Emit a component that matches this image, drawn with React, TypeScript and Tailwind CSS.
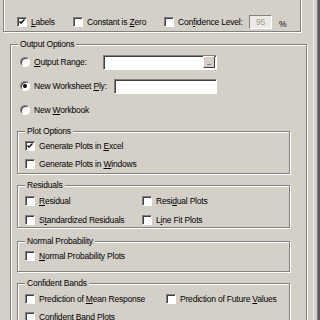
import type { ReactNode } from "react";

const font = { fontFamily: '"Liberation Sans", Arial, sans-serif' };

function Check({ on = false }: { on?: boolean }) {
  return (
    <span className="relative flex h-[10px] w-[10px] shrink-0 border border-t-[#808080] border-l-[#808080] border-b-white border-r-white bg-white shadow-[inset_1px_1px_0_#404040]">
      {on && (
        <svg viewBox="0 0 8 8" className="absolute left-[0px] top-[0px] h-[8px] w-[8px]">
          <path d="M1.5 3.5 L3 5 L6.5 1.5" stroke="#000" strokeWidth="1.4" fill="none" />
        </svg>
      )}
    </span>
  );
}

function Radio({ on = false }: { on?: boolean }) {
  return (
    <span className="flex h-[10px] w-[10px] shrink-0 items-center justify-center rounded-full border border-t-[#808080] border-l-[#808080] border-b-white border-r-white bg-white shadow-[inset_1px_1px_0_#404040]">
      {on && <span className="h-[4px] w-[4px] rounded-full bg-black" />}
    </span>
  );
}

function Group({ label, className, children }: { label: string; className: string; children?: ReactNode }) {
  return (
    <div className={`relative shrink-0 border border-[#808080] shadow-[inset_1px_1px_0_#fff,1px_1px_0_#fff] ${className}`}>
      <span className="absolute left-[7px] top-[-7px] bg-[#d4d0c8] px-[2px] leading-[12px]">{label}</span>
      {children}
    </div>
  );
}

function Item({ box, children, w }: { box: ReactNode; children: ReactNode; w?: string }) {
  return (
    <div className={`flex h-[12px] shrink-0 items-center gap-[4px] ${w ?? ""}`}>
      {box}
      <span className="whitespace-nowrap leading-[12px]">{children}</span>
    </div>
  );
}

const U = ({ c }: { c: string }) => <span className="underline underline-offset-[1px]">{c}</span>;

export default function App() {
  return (
    <div
      className="flex h-[320px] w-[320px] overflow-hidden bg-[#d4d0c8] text-[8.5px] tracking-[-0.2px] text-black"
      style={font}
    >
      <div className="flex w-[313px] shrink-0 flex-col">
        {/* top options */}
        <div className="ml-[3px] mt-[-12px] h-[44px] w-[298px] shrink-0 border border-[#808080] pl-[13px] pt-[24px] shadow-[inset_1px_1px_0_#fff,1px_1px_0_#fff]">
          <div className="flex items-center">
            <Item box={<Check on />} w="w-[56px]">
              <U c="L" />abels
            </Item>
            <Item box={<Check />} w="w-[91px]">
              Constant is <U c="Z" />ero
            </Item>
            <Item box={<Check />} w="w-[85px]">
              Con<U c="f" />idence Level:
            </Item>
            <div className="flex h-[14px] w-[23px] items-center justify-center border border-t-[#808080] border-l-[#808080] border-b-white border-r-white bg-[#eceae4] text-[#a09c94]">
              95
            </div>
            <span className="ml-[7px] mt-[5px]">%</span>
          </div>
        </div>

        {/* output options */}
        <Group label="Output Options" className="ml-[10px] mt-[12px] h-[300px] w-[297px]">
          <div className="flex flex-col gap-[8px] pl-[9px] pt-[9px]">
            <div className="flex h-[16px] items-center">
              <div className="flex w-[83px] items-center gap-[4px]">
                <Radio />
                <span>
                  <U c="O" />utput Range:
                </span>
              </div>
              <div className="flex h-[15px] w-[114px] items-center justify-end border border-t-[#808080] border-l-[#808080] border-b-white border-r-white bg-white pr-[1px] shadow-[inset_1px_1px_0_#404040]">
                <div className="flex h-[12px] w-[12px] items-end justify-center border border-t-white border-l-white border-b-[#404040] border-r-[#404040] bg-[#d4d0c8] pb-[2px]">
                  <span className="h-px w-[4px] bg-[#808080]" />
                </div>
              </div>
            </div>
            <div className="flex h-[16px] items-center">
              <div className="flex w-[94px] items-center gap-[4px]">
                <Radio on />
                <span>
                  New Worksheet <U c="P" />ly:
                </span>
              </div>
              <div className="h-[15px] w-[103px] border border-t-[#808080] border-l-[#808080] border-b-white border-r-white bg-white shadow-[inset_1px_1px_0_#404040]" />
            </div>
            <div className="flex h-[16px] items-center gap-[4px]">
              <Radio />
              <span>
                New <U c="W" />orkbook
              </span>
            </div>
          </div>

          <div className="ml-[6px] mt-[13px] flex flex-col">
            <Group label="Plot Options" className="h-[43px] w-[273px]">
              <div className="flex flex-col gap-[6px] pl-[7px] pt-[8px]">
                <Item box={<Check on />}>
                  Generate Plots in <U c="E" />xcel
                </Item>
                <Item box={<Check />}>
                  Generate Plots in <U c="W" />indows
                </Item>
              </div>
            </Group>

            <Group label="Residuals" className="mt-[11px] h-[43px] w-[273px]">
              <div className="flex flex-col gap-[7px] pl-[7px] pt-[9px]">
                <div className="flex">
                  <Item box={<Check />} w="w-[117px]">
                    <U c="R" />esidual
                  </Item>
                  <Item box={<Check />}>
                    Resi<U c="d" />ual Plots
                  </Item>
                </div>
                <div className="flex">
                  <Item box={<Check />} w="w-[117px]">
                    S<U c="t" />andardized Residuals
                  </Item>
                  <Item box={<Check />}>
                    L<U c="i" />ne Fit Plots
                  </Item>
                </div>
              </div>
            </Group>

            <Group label="Normal Probability" className="mt-[13px] h-[31px] w-[273px]">
              <div className="flex flex-col pl-[7px] pt-[8px]">
                <Item box={<Check />}>
                  <U c="N" />ormal Probability Plots
                </Item>
              </div>
            </Group>

            <Group label="Confident Bands" className="mt-[11px] h-[60px] w-[273px]">
              <div className="flex flex-col gap-[6px] pl-[7px] pt-[9px]">
                <div className="flex">
                  <Item box={<Check />} w="w-[141px]">
                    Prediction of <U c="M" />ean Response
                  </Item>
                  <Item box={<Check />}>
                    Prediction of Future <U c="V" />alues
                  </Item>
                </div>
                <Item box={<Check />}>
                  C<U c="o" />nfident Band Plots
                </Item>
              </div>
            </Group>
          </div>
        </Group>
      </div>
      <div className="w-px shrink-0 bg-[#f4f3ef]" />
      <div className="w-[3px] shrink-0 bg-[#d4d0c8]" />
      <div className="w-px shrink-0 bg-[#808080]" />
      <div className="flex-1 bg-[#5a5a5a]" />
    </div>
  );
}
